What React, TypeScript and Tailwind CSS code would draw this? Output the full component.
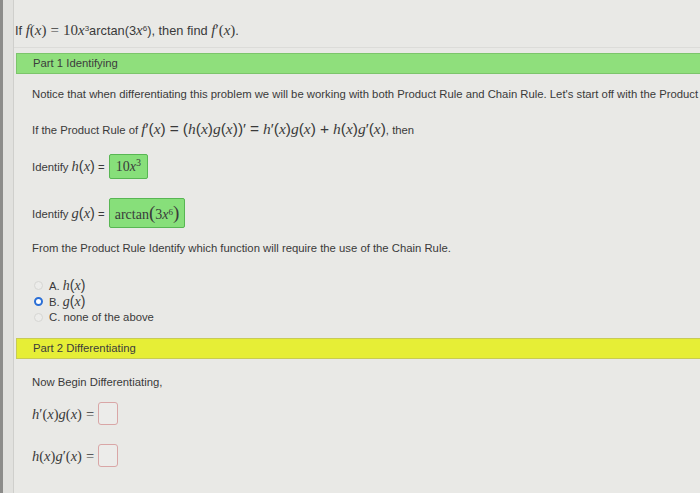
import React from 'react';

const M = ({ children }: { children: React.ReactNode }) => (
  <span className="italic" style={{ fontFamily: '"Liberation Serif", "DejaVu Serif", serif' }}>{children}</span>
);

const R = ({ children }: { children: React.ReactNode }) => (
  <span className="not-italic" style={{ fontFamily: '"Liberation Serif", "DejaVu Serif", serif' }}>{children}</span>
);

const Op = ({ children }: { children: React.ReactNode }) => (
  <span className="mx-[4px]">{children}</span>
);

const Radio = ({ checked }: { checked?: boolean }) => (
  <span
    className={`inline-block h-[9px] w-[9px] rounded-full mr-[6px] ${
      checked ? 'border-[2.5px] border-[#2b6fd6] bg-white' : 'border border-[#d6d6d3] bg-[#ececea]'
    }`}
  />
);

const SectionBar = ({ label, tone }: { label: string; tone: 'green' | 'yellow' }) => (
  <div
    className={`h-[21px] flex items-center pl-4 text-[11.3px] text-[#3c3c3c] border-y border-l ${
      tone === 'green' ? 'bg-[#8fdf7c] border-[#7cc56b]' : 'bg-[#e6ee36] border-[#c8cb55]'
    }`}
  >
    {label}
  </div>
);

export default function App() {
  return (
    <div
      className="w-[700px] h-[493px] overflow-hidden bg-[#e9e9e6] flex text-[#3a3a3a]"
      style={{ fontFamily: '"Liberation Sans", Arial, sans-serif' }}
    >
      <div className="w-[3px] bg-[#8c8c8a] shrink-0" />
      <div className="w-[11px] bg-[#e1e1de] shrink-0 border-r border-[#cfcfcc]" />
      <div className="flex-1 flex flex-col">
        <div className="pt-[21px] pb-[7px] pl-[1px] text-[12.8px] leading-[18px] border-b border-[#dcdcd9]">
          If <span className="text-[15px]"><M>f</M><R>(</R><M>x</M><R>)<Op>=</Op>10</R><M>x</M></span>
          <sup className="text-[8px]">3</sup>arctan(3<span className="text-[15px]"><M>x</M></span>
          <sup className="text-[8px]">6</sup>), then find{' '}
          <span className="text-[15px]"><M>f</M><R>′(</R><M>x</M><R>)</R></span>.
        </div>

        <div className="pt-[5px] pl-[2px] flex flex-col">
          <SectionBar label="Part 1 Identifying" tone="green" />

          <div className="pl-4 text-[11.3px] leading-[16px]">
            <p className="mt-[12px]">
              Notice that when differentiating this problem we will be working with both Product Rule and Chain Rule. Let's start off with the Product
            </p>
            <p className="mt-[19px]">
              If the Product Rule of{' '}
              <span className="text-[15.5px]">
                <M>f</M>′(<M>x</M>)<Op>=</Op>(<M>h</M>(<M>x</M>)<M>g</M>(<M>x</M>))′<Op>=</Op><M>h</M>′(<M>x</M>)<M>g</M>(<M>x</M>)<Op>+</Op><M>h</M>(<M>x</M>)<M>g</M>′(<M>x</M>)
              </span>
              , then
            </p>

            <div className="mt-[16px] flex items-center">
              <span>
                Identify <span className="text-[14.5px]"><M>h</M>(<M>x</M>)</span> =
              </span>
              <span className="ml-[4px] h-[25px] px-[6px] flex items-center bg-[#87df7a] border border-[#58b653] rounded-[2px] text-[14px]">
                <R>10<M>x</M><sup className="text-[10px]">3</sup></R>
              </span>
            </div>

            <div className="mt-[19px] flex items-center">
              <span>
                Identify <span className="text-[14.5px]"><M>g</M>(<M>x</M>)</span> =
              </span>
              <span className="ml-[4px] h-[30px] px-[5px] flex items-center bg-[#87df7a] border border-[#58b653] rounded-[2px] text-[14px]">
                <R>
                  arctan<span className="text-[19px] leading-none">(</span>3<M>x</M><sup className="text-[9px]">6</sup>
                  <span className="text-[19px] leading-none">)</span>
                </R>
              </span>
            </div>

            <p className="mt-[12px]">From the Product Rule Identify which function will require the use of the Chain Rule.</p>

            <div className="mt-[22px] flex flex-col gap-[2px] pl-[2px]">
              <div className="flex items-center h-[14px]">
                <Radio />
                <span>A. <span className="text-[14px]"><M>h</M>(<M>x</M>)</span></span>
              </div>
              <div className="flex items-center h-[14px]">
                <Radio checked />
                <span>B. <span className="text-[14px]"><M>g</M>(<M>x</M>)</span></span>
              </div>
              <div className="flex items-center h-[14px]">
                <Radio />
                <span>C. none of the above</span>
              </div>
            </div>
          </div>

          <div className="mt-[14px]">
            <SectionBar label="Part 2 Differentiating" tone="yellow" />
          </div>

          <div className="pl-4 text-[11.3px] leading-[16px]">
            <p className="mt-[15px]">Now Begin Differentiating,</p>

            <div className="mt-[12px] flex items-center text-[14.5px]">
              <R><M>h</M>′(<M>x</M>)<M>g</M>(<M>x</M>)<Op>=</Op></R>
              <span className="w-[20px] h-[23px] bg-[#ececea] border border-[#d9a6a6] rounded-[3px]" />
            </div>

            <div className="mt-[19px] flex items-center text-[14.5px]">
              <R><M>h</M>(<M>x</M>)<M>g</M>′(<M>x</M>)<Op>=</Op></R>
              <span className="w-[20px] h-[23px] bg-[#ececea] border border-[#d9a6a6] rounded-[3px]" />
            </div>
          </div>
        </div>
      </div>
    </div>
  );
}
